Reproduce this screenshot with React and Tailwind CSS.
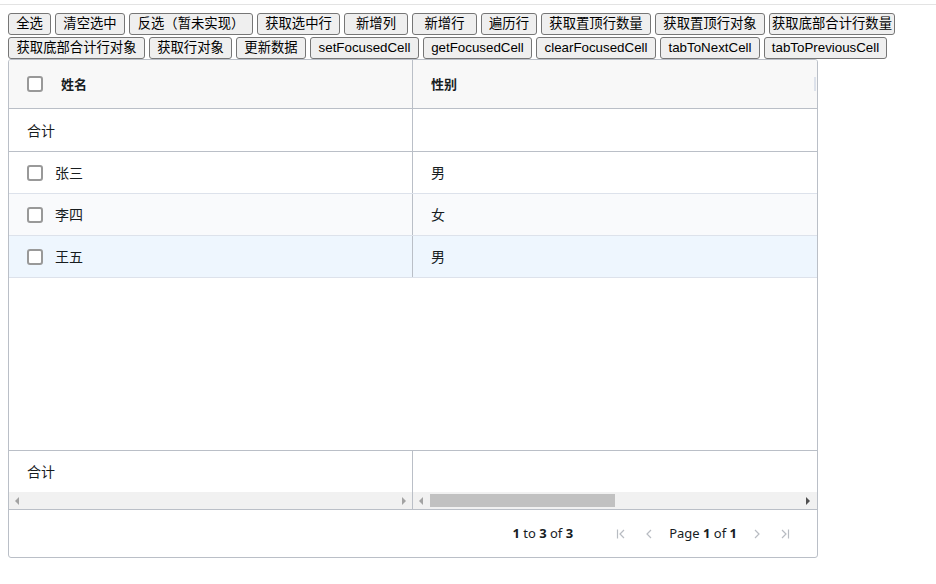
import React from 'react';

const row1 = [
  ['全选', 43], ['清空选中', 70], ['反选（暂未实现）', 124], ['获取选中行', 83], ['新增列', 64],
  ['新增行', 65], ['遍历行', 56], ['获取置顶行数量', 110], ['获取置顶行对象', 110], ['获取底部合计行数量', 126],
];
const row2 = [
  ['获取底部合计行对象', 137], ['获取行对象', 83], ['更新数据', 70], ['setFocusedCell', 109],
  ['getFocusedCell', 109], ['clearFocusedCell', 120], ['tabToNextCell', 100], ['tabToPreviousCell', 123],
];

const rows = [
  { name: '张三', sex: '男', bg: 'bg-white' },
  { name: '李四', sex: '女', bg: 'bg-[#f9fafc]' },
  { name: '王五', sex: '男', bg: 'bg-[#eef6fe]' },
];

const Btn = ({ label, w }) => (
  <button
    style={{ width: w }}
    className="h-[22px] shrink-0 rounded-[3px] border border-[#767676] bg-[#efefef] text-[13.33px] leading-none text-black whitespace-nowrap"
  >
    {label}
  </button>
);

const Check = () => (
  <span className="inline-block h-[16px] w-[16px] shrink-0 rounded-[3px] border-2 border-[#999] bg-white" />
);

const Arrow = ({ dir, dark }) => (
  <svg width="6" height="8" viewBox="0 0 6 8">
    {dir === 'left'
      ? <polygon points="5,0 5,8 1,4" fill={dark ? '#505050' : '#a3a3a3'} />
      : <polygon points="1,0 1,8 5,4" fill={dark ? '#505050' : '#a3a3a3'} />}
  </svg>
);

const PageIcon = ({ type }) => (
  <svg width="16" height="16" viewBox="0 0 16 16" fill="none" stroke="#b8bcc2" strokeWidth="1.2">
    {type === 'first' && (<><path d="M4.5 3.5v9" /><path d="M11 4l-4 4 4 4" /></>)}
    {type === 'prev' && <path d="M10 4l-4 4 4 4" />}
    {type === 'next' && <path d="M6 4l4 4-4 4" />}
    {type === 'last' && (<><path d="M11.5 3.5v9" /><path d="M5 4l4 4-4 4" /></>)}
  </svg>
);

export default function App() {
  return (
    <div className="min-h-[584px] bg-white text-[#181d1f]">
      <div className="h-[5px] border-b border-[#e3e3e3]" />
      <div className="pl-[8px] pt-[8px]" style={{ fontFamily: '"Liberation Sans", "Noto Sans CJK SC", sans-serif' }}>
        <div className="flex gap-[4px]">
          {row1.map(([l, w]) => <Btn key={l} label={l} w={w} />)}
        </div>
        <div className="mt-[2px] flex gap-[4px]">
          {row2.map(([l, w]) => <Btn key={l} label={l} w={w} />)}
        </div>
      </div>

      <div
        className="ml-[8px] flex h-[499px] w-[810px] flex-col overflow-hidden rounded-[3px] border border-[#babfc7] text-[13px]"
        style={{ fontFamily: '"Noto Sans", "Noto Sans CJK SC", sans-serif' }}
      >
        {/* header */}
        <div className="flex h-[49px] shrink-0 border-b border-[#babfc7] bg-[#f8f8f8] font-bold">
          <div className="flex w-[404px] items-center border-r border-[#babfc7] pl-[18px]">
            <Check />
            <span className="ml-[18px] pt-[2px]">姓名</span>
          </div>
          <div className="relative flex flex-1 items-center pl-[18px]">
            <span className="pt-[2px]">性别</span>
            <span className="absolute right-[1px] top-[17px] h-[14px] w-[2px] bg-[#dde2eb]" />
          </div>
        </div>

        {/* pinned top */}
        <div className="flex h-[43px] shrink-0 border-b border-[#babfc7] text-[14px]">
          <div className="flex w-[404px] items-center border-r border-[#babfc7] pl-[18px]">合计</div>
          <div className="flex-1" />
        </div>

        {rows.map((r) => (
          <div key={r.name} className={`flex h-[42px] shrink-0 border-b border-[#dde2eb] text-[14px] ${r.bg}`}>
            <div className="flex w-[404px] items-center border-r border-[#babfc7] pl-[18px]">
              <Check />
              <span className="ml-[12px]">{r.name}</span>
            </div>
            <div className="flex flex-1 items-center pl-[18px]">{r.sex}</div>
          </div>
        ))}

        <div className="flex-1" />

        {/* pinned bottom */}
        <div className="flex h-[42px] shrink-0 border-t border-[#babfc7] text-[14px]">
          <div className="flex w-[404px] items-center border-r border-[#babfc7] pl-[18px]">合计</div>
          <div className="flex-1" />
        </div>

        {/* horizontal scrollbar */}
        <div className="flex h-[17px] shrink-0 bg-[#f1f1f1]">
          <div className="flex w-[404px] items-center justify-between border-r border-[#babfc7] px-[5px]">
            <Arrow dir="left" />
            <Arrow dir="right" />
          </div>
          <div className="flex flex-1 items-center pl-[5px] pr-[6px]">
            <Arrow dir="left" />
            <div className="ml-[6px] h-[13px] w-[185px] bg-[#c1c1c1]" />
            <div className="flex-1" />
            <Arrow dir="right" dark />
          </div>
        </div>

        {/* pagination */}
        <div className="flex h-[48px] shrink-0 items-center justify-end border-t border-[#babfc7] pr-[24px]">
          <span className="mr-[40px]">
            <b>1</b> to <b>3</b> of <b>3</b>
          </span>
          <div className="flex items-center gap-[12px]">
            <PageIcon type="first" />
            <PageIcon type="prev" />
            <span>
              Page <b>1</b> of <b>1</b>
            </span>
            <PageIcon type="next" />
            <PageIcon type="last" />
          </div>
        </div>
      </div>
    </div>
  );
}
